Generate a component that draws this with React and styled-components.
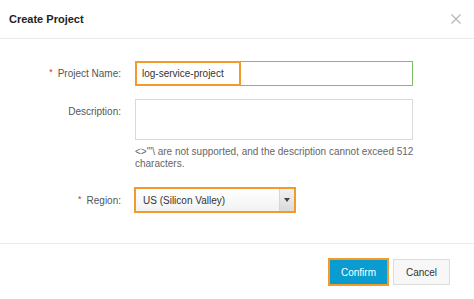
import React from 'react';
import styled, { createGlobalStyle } from 'styled-components';

const GlobalStyle = createGlobalStyle`
  html, body {
    margin: 0;
    padding: 0;
    background: #fff;
    font-family: "Liberation Sans", Arial, sans-serif;
  }
`;

const Dialog = styled.div`
  width: 474px;
  height: 299px;
  display: flex;
  flex-direction: column;
  background: #fff;
  box-sizing: border-box;
`;

const Header = styled.div`
  height: 38px;
  display: flex;
  align-items: center;
  justify-content: space-between;
  padding: 0 12px 0 9px;
  border-bottom: 1px solid #ebebeb;
`;

const Title = styled.h1`
  margin: 0;
  font-size: 11px;
  font-weight: bold;
  color: #222;
  padding-top: 0;
`;

const Close = styled.button`
  border: none;
  background: none;
  padding: 0;
  width: 12px;
  height: 12px;
  display: flex;
  cursor: pointer;
`;

const Body = styled.div`
  padding: 22px 0 0 0;
  height: 205px;
  box-sizing: border-box;
  border-bottom: 1px solid #ebebeb;
`;

const Row = styled.div`
  display: flex;
  align-items: ${p => (p.$top ? 'flex-start' : 'center')};
  margin-bottom: ${p => p.$mb || 0}px;
`;

const Label = styled.label`
  width: 121px;
  text-align: right;
  font-size: 10px;
  color: #555;
  margin-right: 14px;
  padding-top: ${p => p.$pt || 0}px;
  flex-shrink: 0;
`;

const Star = styled.span`
  color: #e0301e;
  font-size: 9px;
  margin-right: 5px;
  position: relative;
  top: -2px;
`;

const Field = styled.div`
  position: relative;
  width: 278px;
`;

const TextInput = styled.div`
  height: 25px;
  box-sizing: border-box;
  border: 1px solid #7bbf6a;
  font-size: 10px;
  color: #333;
  display: flex;
  align-items: center;
  padding-left: 6px;
`;

const Highlight = styled.span`
  position: absolute;
  left: 0;
  top: 0;
  width: ${p => p.$w}px;
  height: 100%;
  box-sizing: border-box;
  border: 2px solid #f39a2b;
`;

const TextArea = styled.div`
  height: 41px;
  box-sizing: border-box;
  border: 1px solid #d9d9d9;
`;

const Help = styled.p`
  margin: 6px 0 0 0;
  font-size: 10px;
  line-height: 12px;
  color: #666;
  width: 280px;
`;

const SelectWrap = styled.div`
  width: 162px;
  height: 26px;
  box-sizing: border-box;
  border: 2px solid #f39a2b;
  display: flex;
  margin-left: -1px;
`;

const SelectValue = styled.div`
  flex: 1;
  display: flex;
  align-items: center;
  padding-left: 7px;
  font-size: 10px;
  color: #333;
  background: linear-gradient(#fff, #f2f2f2);
`;

const Arrow = styled.div`
  width: 14px;
  display: flex;
  align-items: center;
  justify-content: center;
  background: linear-gradient(#f2f2f2, #dadada);
  border-left: 1px solid #d6d6d6;
`;

const Footer = styled.div`
  flex: 1;
  display: flex;
  justify-content: flex-end;
  align-items: flex-start;
  gap: 4px;
  padding: 14px 24px 0 0;
`;

const Confirm = styled.button`
  width: 61px;
  height: 28px;
  box-sizing: border-box;
  border: 2px solid #f39a2b;
  background: #0a9bd1;
  color: #fff;
  font-family: inherit;
  font-size: 10px;
  padding: 0;
`;

const Cancel = styled.button`
  width: 57px;
  height: 26px;
  margin-top: 1px;
  box-sizing: border-box;
  border: 1px solid #dcdcdc;
  background: #f7f7f7;
  color: #333;
  font-family: inherit;
  font-size: 10px;
  padding: 0;
`;

export default function App() {
  return (
    <>
      <GlobalStyle />
      <Dialog>
        <Header>
          <Title>Create Project</Title>
          <Close aria-label="close">
            <svg width="12" height="12" viewBox="0 0 12 12">
              <path d="M1.5 1.5 L10.5 10.5 M10.5 1.5 L1.5 10.5" stroke="#b8b8b8" strokeWidth="1.3" />
            </svg>
          </Close>
        </Header>
        <Body>
          <Row $mb={13}>
            <Label><Star>*</Star>Project Name:</Label>
            <Field>
              <TextInput>log-service-project</TextInput>
              <Highlight $w={106} />
            </Field>
          </Row>
          <Row $top $mb={17}>
            <Label $pt={7}>Description:</Label>
            <Field>
              <TextArea />
              <Help>&lt;&gt;"'\ are not supported, and the description cannot exceed 512 characters.</Help>
            </Field>
          </Row>
          <Row>
            <Label><Star>*</Star>Region:</Label>
            <SelectWrap>
              <SelectValue>US (Silicon Valley)</SelectValue>
              <Arrow>
                <svg width="6" height="4" viewBox="0 0 6 4">
                  <path d="M0 0 H6 L3 4 Z" fill="#444" />
                </svg>
              </Arrow>
            </SelectWrap>
          </Row>
        </Body>
        <Footer>
          <Confirm>Confirm</Confirm>
          <Cancel>Cancel</Cancel>
        </Footer>
      </Dialog>
    </>
  );
}
